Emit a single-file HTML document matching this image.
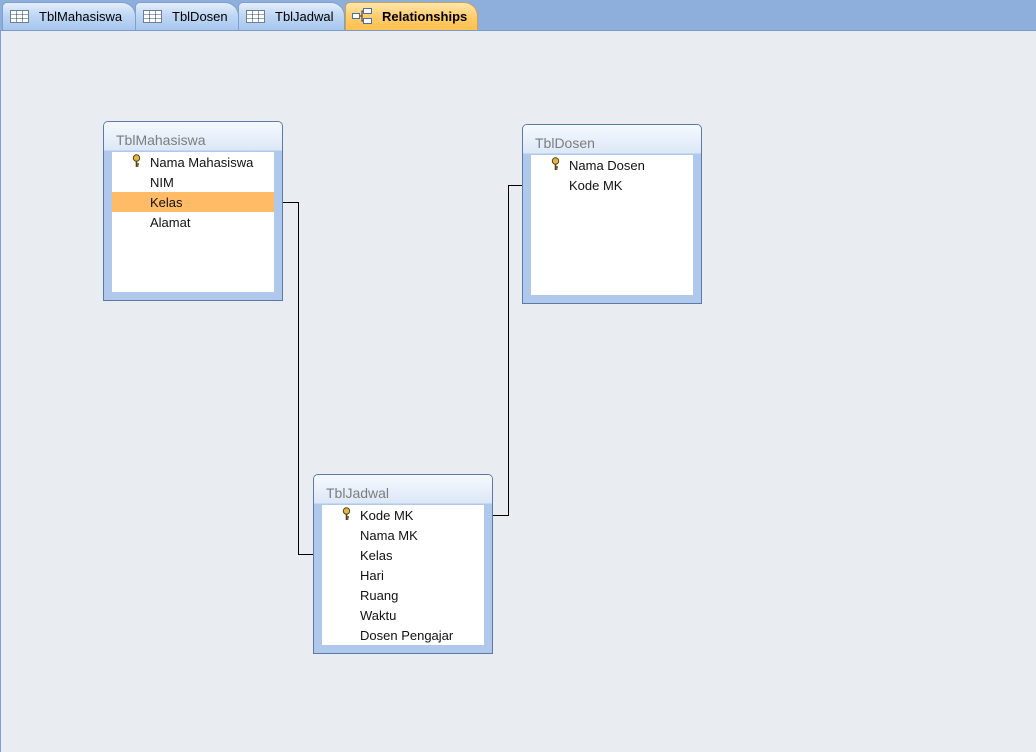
<!DOCTYPE html><html><head><style>
body{margin:0;width:1036px;height:752px;background:#e9edf1;position:relative;overflow:hidden;font-family:"Liberation Sans",sans-serif}
.bar{position:absolute;left:0;top:0;width:1036px;height:30px;background:#8eaedb;border-bottom:1px solid #7b9ccb}
.tab{position:absolute;top:2px;height:28px;border:1px solid #7f9fcf;border-bottom:none;border-radius:5px 14px 0 0;background:linear-gradient(#e4eefb,#bcd5f3 50%,#a8c7ef);font-size:13px;line-height:27px;box-sizing:border-box}
.tab span{position:absolute;left:36px}
.ico{position:absolute;left:7px;top:7px;width:19px;height:13px;border:1px solid #6d7d96;background:repeating-linear-gradient(90deg,transparent 0 5px,#8a9ab0 5px 6px),repeating-linear-gradient(#fff 0 3px,#9aa8bc 3px 4px);background-blend-mode:multiply;box-sizing:border-box}
.act{background:linear-gradient(#ffe6ad,#ffcd6e 50%,#ffc04c);border-color:#c9a15a;font-weight:bold}
.left{position:absolute;left:0;top:30px;width:1px;height:722px;background:#7f9fcf}
.box{position:absolute;width:180px;height:180px;border:1px solid #5a7aa8;border-radius:5px 5px 0 0;background:#b0c8ec;box-sizing:border-box}
.hd{height:29px;background:linear-gradient(#f5f9fe,#dce8f7);border-radius:4px 4px 0 0;border-bottom:1px solid #c5d8f0;color:#7d7d7d;font-size:14px;line-height:36px;padding-left:12px;box-sizing:border-box}
.wh{position:absolute;left:8px;right:8px;top:30px;bottom:8px;background:#fff}
.r{height:20px;line-height:21px;font-size:13px;padding-left:38px;color:#111;position:relative}
.sel{background:#ffbb66}
.key{position:absolute;left:20px;top:2px}
.ln{position:absolute;background:#000}
</style></head><body>
<div class="bar"></div>
<div class="tab" style="left:2px;width:134px"><div class="ico"></div><span>TblMahasiswa</span></div>
<div class="tab" style="left:135px;width:104px"><div class="ico"></div><span>TblDosen</span></div>
<div class="tab" style="left:238px;width:107px"><div class="ico"></div><span>TblJadwal</span></div>
<div class="tab act" style="left:345px;width:133px"><svg style="position:absolute;left:6px;top:5px" width="20" height="16"><rect x="0.5" y="5.5" width="7" height="5" fill="#fff" stroke="#4a6ea8"/><rect x="11.5" y="0.5" width="8" height="5" fill="#fff" stroke="#4a6ea8"/><rect x="11.5" y="10.5" width="8" height="5" fill="#fff" stroke="#4a6ea8"/><path d="M8 8H10V3H11M10 8V13H11" stroke="#333" fill="none"/></svg><span>Relationships</span></div>
<div class="left"></div>

<div class="box" style="left:103px;top:121px"><div class="hd">TblMahasiswa</div><div class="wh">
<div class="r"><svg class="key" width="9" height="14"><circle cx="4.5" cy="4" r="3.2" fill="#e0b84a" stroke="#5a4210"/><path d="M4.5 7V13M4.5 10H7M4.5 12H6.5" stroke="#5a4210" stroke-width="1.6"/></svg>Nama Mahasiswa</div><div class="r">NIM</div><div class="r sel">Kelas</div><div class="r">Alamat</div></div></div>

<div class="box" style="left:522px;top:124px"><div class="hd">TblDosen</div><div class="wh">
<div class="r"><svg class="key" width="9" height="14"><circle cx="4.5" cy="4" r="3.2" fill="#e0b84a" stroke="#5a4210"/><path d="M4.5 7V13M4.5 10H7M4.5 12H6.5" stroke="#5a4210" stroke-width="1.6"/></svg>Nama Dosen</div><div class="r">Kode MK</div></div></div>

<div class="box" style="left:313px;top:474px"><div class="hd">TblJadwal</div><div class="wh">
<div class="r"><svg class="key" width="9" height="14"><circle cx="4.5" cy="4" r="3.2" fill="#e0b84a" stroke="#5a4210"/><path d="M4.5 7V13M4.5 10H7M4.5 12H6.5" stroke="#5a4210" stroke-width="1.6"/></svg>Kode MK</div><div class="r">Nama MK</div><div class="r">Kelas</div><div class="r">Hari</div><div class="r">Ruang</div><div class="r">Waktu</div><div class="r">Dosen Pengajar</div></div></div>

<div class="ln" style="left:283px;top:202px;width:15px;height:1px"></div>
<div class="ln" style="left:298px;top:202px;width:1px;height:352px"></div>
<div class="ln" style="left:298px;top:554px;width:15px;height:1px"></div>
<div class="ln" style="left:493px;top:515px;width:15px;height:1px"></div>
<div class="ln" style="left:508px;top:185px;width:1px;height:331px"></div>
<div class="ln" style="left:508px;top:185px;width:14px;height:1px"></div>
</body></html>
